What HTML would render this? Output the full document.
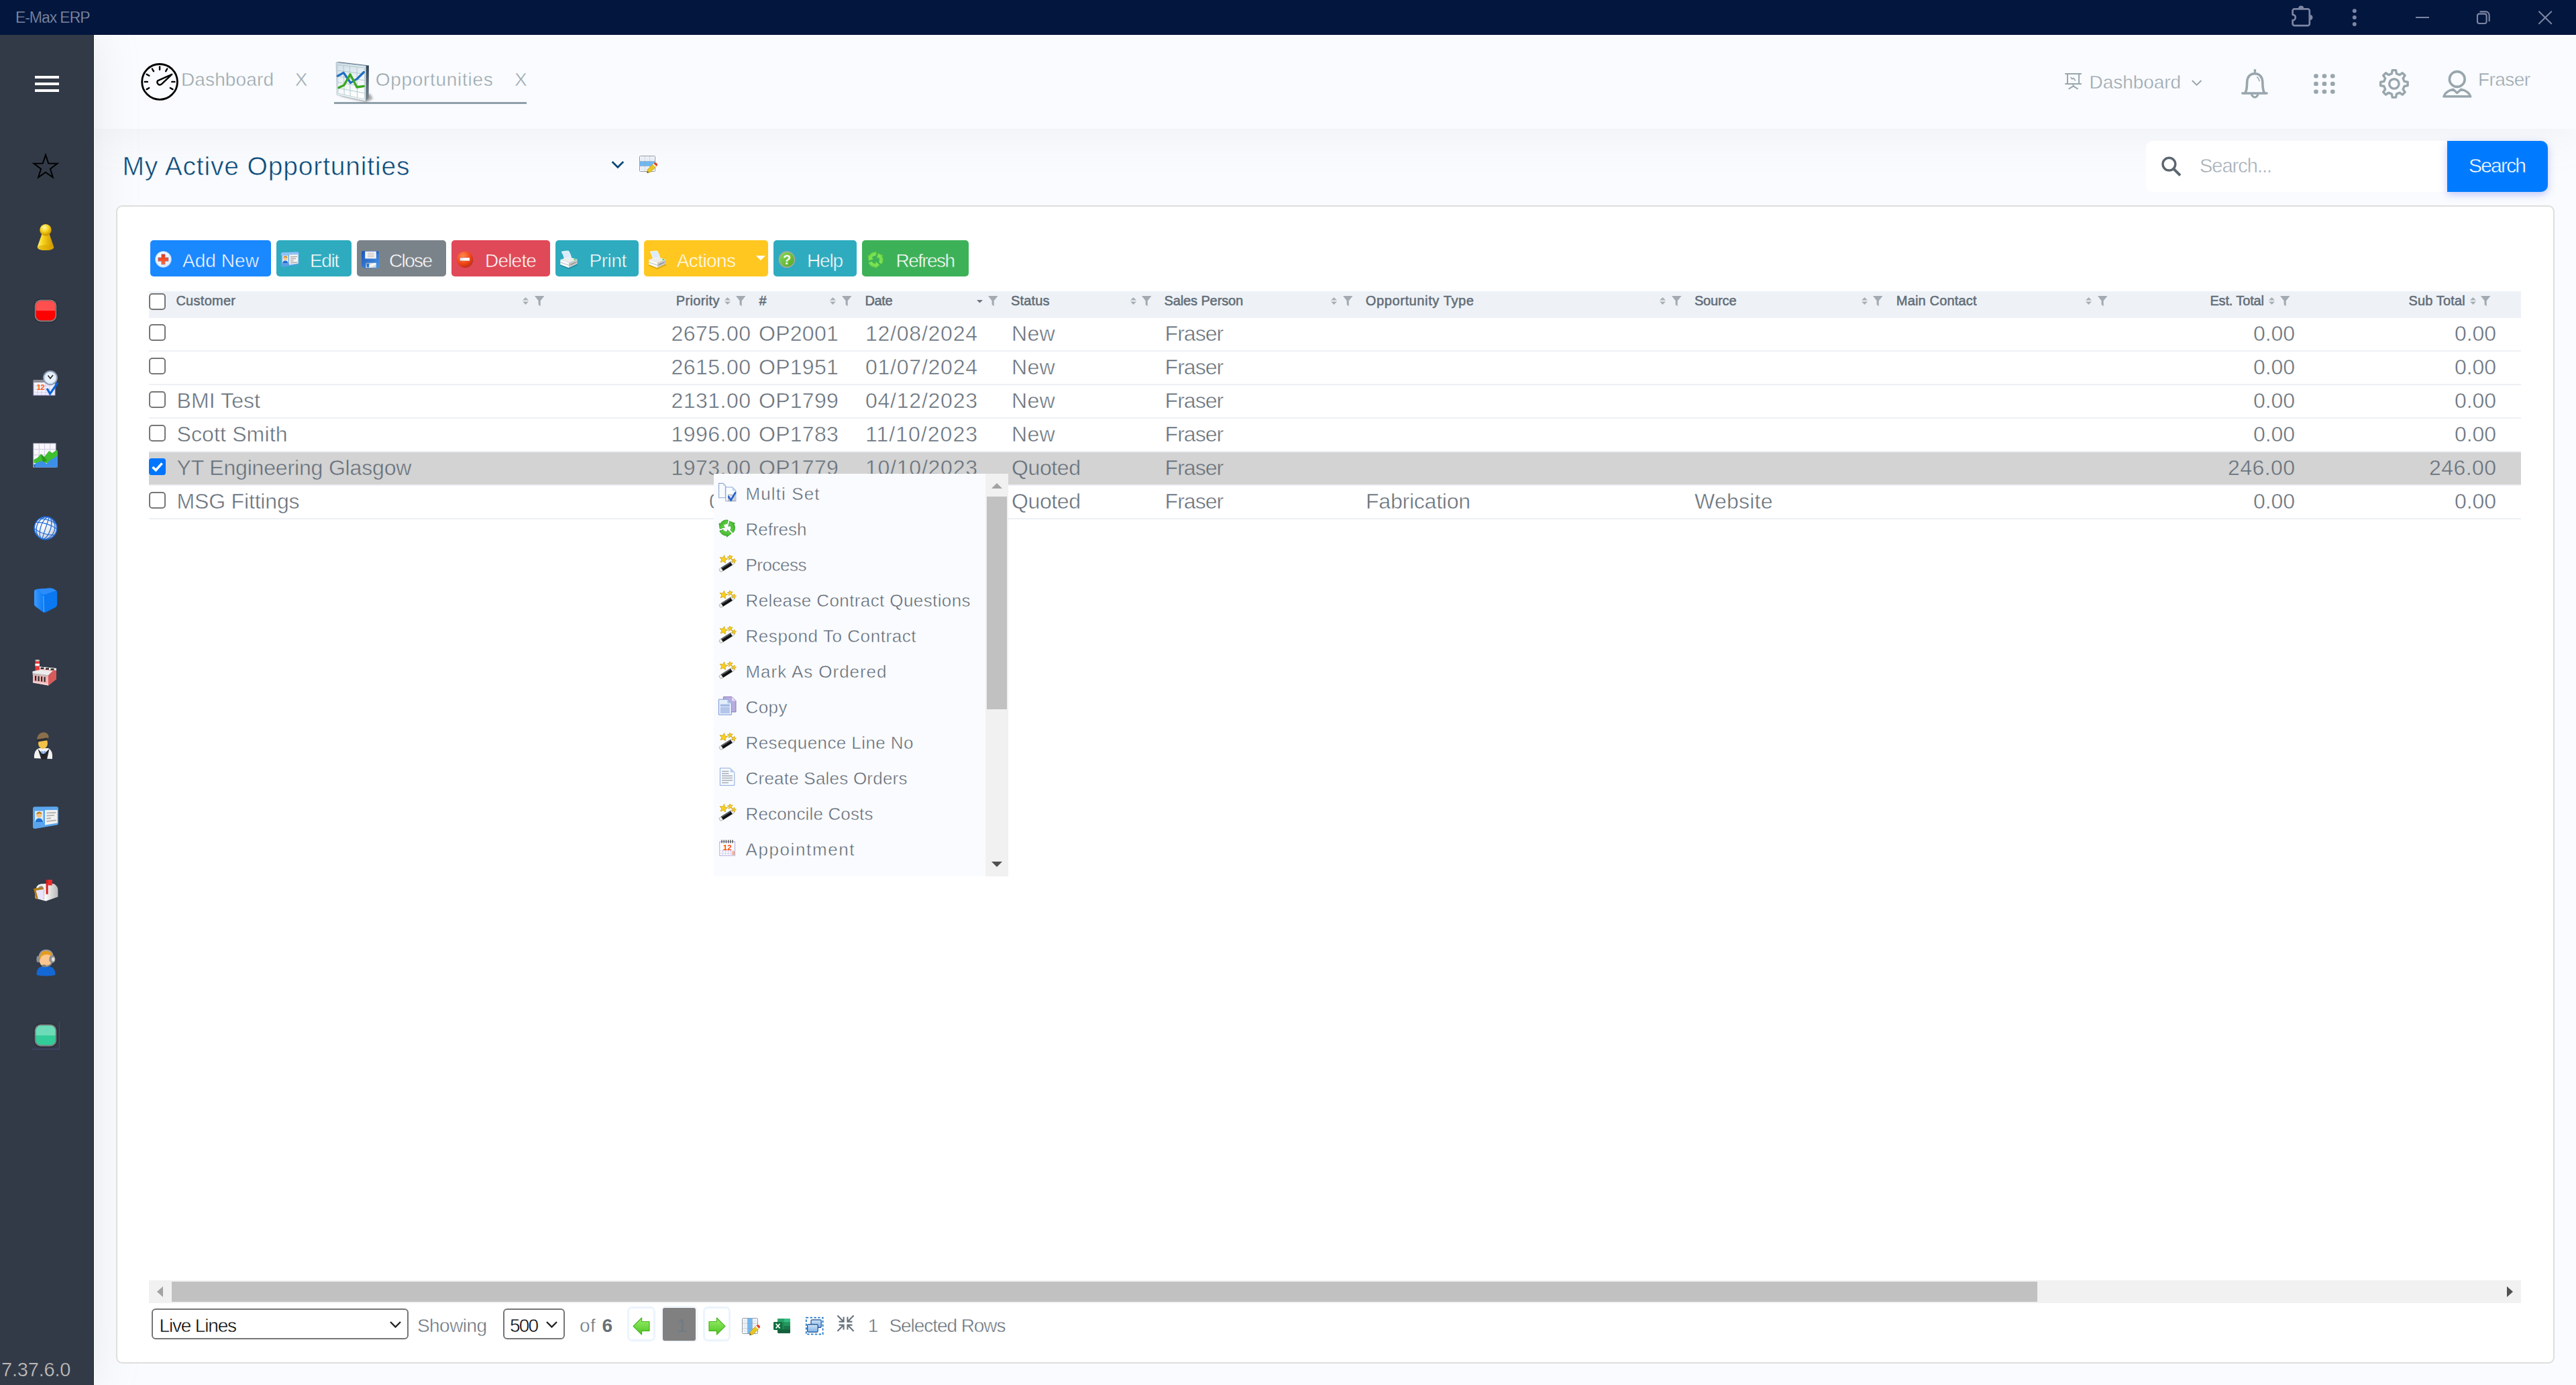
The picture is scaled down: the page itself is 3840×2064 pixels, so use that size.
<!DOCTYPE html>
<html lang="en"><head><meta charset="utf-8"><title>E-Max ERP</title>
<style>
html,body{margin:0;padding:0}
body{width:3840px;height:2064px;overflow:hidden;position:relative;background:#fafbfe;font-family:"Liberation Sans",sans-serif;}
.b{position:absolute;box-sizing:border-box;display:block}
.t{position:absolute;white-space:nowrap;line-height:1;margin:0;padding:0}
</style></head><body>
<div class="b " style="left:140px;top:52px;width:3700px;height:140px;background:#fafbfe;box-shadow:0 0 70px 0 rgba(154,161,171,.15);"></div>
<aside class="sidebar">
<div class="b " style="left:0px;top:52px;width:140px;height:2012px;background:#323a47;box-shadow:0 0 70px 0 rgba(154,161,171,.20);"></div>
<div class="b " style="left:139px;top:52px;width:1px;height:2012px;background:#29303c;"></div>
<div class="b " style="left:140px;top:52px;width:1px;height:2012px;background:#fff;"></div>
<div class="b " style="left:140px;top:52px;width:3700px;height:1px;background:#fff;"></div>
<div class="b " style="left:52px;top:112.5px;width:36px;height:4px;background:#fff;"></div>
<div class="b " style="left:52px;top:122.5px;width:36px;height:4px;background:#fff;"></div>
<div class="b " style="left:52px;top:132.5px;width:36px;height:4px;background:#fff;"></div>
<div class="t " style="left:2.00px;top:2027.45px;font-size:29px;color:#cbc7c5;letter-spacing:-0.196px;-webkit-text-stroke:0.5px #323a47;">7.37.6.0</div>
<svg class="b" style="left:46px;top:226px;" width="44" height="42" viewBox="46 226 44 42"><path transform="translate(68 247.5) scale(0.925) translate(-68 -247.5)" d="M68 229.5 L72.6 243.2 L87 243.4 L75.5 252 L79.7 265.6 L68 257.4 L56.3 265.6 L60.5 252 L49 243.4 L63.4 243.2 Z" fill="none" stroke="#000" stroke-width="2.1" stroke-linejoin="miter"/></svg>
<svg class="b" style="left:52px;top:332px;" width="32" height="44" viewBox="52 332 32 44"><defs><linearGradient id="pg" x1="0" x2="1"><stop offset="0" stop-color="#fff27a"/><stop offset=".35" stop-color="#f7d21a"/><stop offset="1" stop-color="#c98f00"/></linearGradient><radialGradient id="ph" cx=".4" cy=".3" r=".7"><stop offset="0" stop-color="#fff9a8"/><stop offset=".5" stop-color="#f7d21a"/><stop offset="1" stop-color="#c58c00"/></radialGradient></defs><path d="M63 347 L73 347 L80.3 368 Q80.3 373 68 373 Q55.7 373 55.7 368 Z" fill="url(#pg)"/><ellipse cx="68" cy="369" rx="12.3" ry="4" fill="#d9a400" opacity=".55"/><circle cx="68" cy="342.7" r="8.7" fill="url(#ph)"/></svg>
<svg class="b" style="left:50px;top:445px;" width="36" height="36" viewBox="0 0 36 36"><rect x="0.5" y="0.5" width="35" height="35" rx="10" fill="#20242e"/><rect x="1.6" y="1.6" width="32.8" height="32.8" rx="9" fill="#7d7d80"/><rect x="3.6" y="3.6" width="28.8" height="28.8" rx="7" fill="#ff0000"/><path d="M3.6 18 V10.6 a7 7 0 0 1 7 -7 H25.4 a7 7 0 0 1 7 7 V18 Z" fill="#ff4f4f"/></svg>
<svg class="b" style="left:48px;top:550px;" width="42" height="42" viewBox="48 550 42 42"><rect x="50" y="567" width="32" height="22" fill="#f4f2ff" stroke="#a9a4d6" stroke-width="1"/><rect x="50" y="566" width="32" height="4" fill="#8d8d95"/><path d="M52 575 H80 M52 580 H80 M52 585 H80 M56 572 V589 M62 572 V589 M68 572 V589 M74 572 V589" stroke="#c9c6ea" stroke-width=".8"/><text x="55" y="581" font-family="Liberation Sans,sans-serif" font-weight="bold" font-size="10.5" fill="#ff5a00">12</text><path d="M70 579 L74.6 586.8 L86 570.5" fill="none" stroke="#0a63d8" stroke-width="3.2"/><circle cx="75" cy="563" r="10.2" fill="#cfe3fb" stroke="#8a93a3" stroke-width="1.8"/><circle cx="75" cy="563" r="7.6" fill="#e9f3ff"/><path d="M71.5 559.5 L75 564 L79 559" fill="none" stroke="#222" stroke-width="1.5"/></svg>
<svg class="b" style="left:48px;top:658px;" width="42" height="42" viewBox="48 658 42 42"><rect x="50" y="661" width="33" height="35" fill="#f7f6fb" stroke="#d6d3e6" stroke-width="1"/><path d="M50 669.5 H83 M50 678 H83 M50 686.5 H83 M58.3 661 V696 M66.5 661 V696 M74.8 661 V696" stroke="#cfcbe2" stroke-width="1"/><path d="M50.5 685 L56 682 L61 676.5 L66 681 L73 672 L78 675 L84.5 670.5 L86 672 V690 H50.5 Z" fill="#3fc02f"/><path d="M61 676.5 L66 681 L70 686 L64 690 Z" fill="#2a9a1e"/><path d="M50.5 692 L57 688.5 L63 687 L69.5 691 L74 686 L79 683.5 L86 679 V696.5 H52.5 L50.5 695 Z" fill="#3d8fe6"/><path d="M50.5 692 L52.5 694 V697 L50.5 695 Z" fill="#1f5fb5"/></svg>
<svg class="b" style="left:49px;top:768px;" width="38" height="38" viewBox="49 768 38 38"><defs><radialGradient id="gg" cx=".4" cy=".35" r=".75"><stop offset="0" stop-color="#ffffff"/><stop offset=".6" stop-color="#dfe3ea"/><stop offset="1" stop-color="#a9b2c3"/></radialGradient></defs><circle cx="68" cy="787" r="17" fill="url(#gg)" stroke="#1c5fc4" stroke-width="1.6"/><g fill="none" stroke="#1f6ad6" stroke-width="1.25" transform="rotate(18 68 787)"><ellipse cx="68" cy="787" rx="7.5" ry="17"/><path d="M68 770 V804"/><path d="M51.5 783 Q68 778 84.5 783"/><path d="M51.5 792.5 Q68 799 84.5 792.5"/><path d="M55 776 Q68 772.5 81 776"/><ellipse cx="68" cy="787" rx="13.5" ry="17"/></g></svg>
<svg class="b" style="left:49px;top:874px;" width="38" height="42" viewBox="49 874 38 42"><defs><linearGradient id="cb1" x1="0" x2="1"><stop offset="0" stop-color="#3d9bff"/><stop offset="1" stop-color="#0a7af2"/></linearGradient></defs><path d="M51 882 Q51 878.5 54 878 L74 876.6 Q77 876.5 79 877.3 L84 880 Q85.2 881 85.2 883 V901 Q85.2 903.5 83 905 L68 912.5 Q66 913.4 64 912 L52.6 903.5 Q51 902.3 51 900 Z" fill="#0a78f0"/><path d="M51 882 Q51 879 54 878.8 L62 884.5 Q64.5 886 64.6 889 L65.5 912.6 Q64.6 912.6 64 912 L52.6 903.5 Q51 902.3 51 900 Z" fill="url(#cb1)"/><path d="M54 878 L74 876.6 Q77 876.5 79 877.3 L84 880 L66 886.3 Q64 886 62 884.5 Z" fill="#2b8dfb"/><path d="M64.6 888 L65.5 912" stroke="#8cc4ff" stroke-width="1" opacity=".8"/></svg>
<svg class="b" style="left:46px;top:981px;" width="42" height="44" viewBox="46 981 42 44"><rect x="52.5" y="984" width="6.5" height="17" fill="#e53b3b"/><rect x="52.5" y="989" width="6.5" height="3.4" fill="#fff"/><ellipse cx="55.8" cy="984.2" rx="3.3" ry="1.3" fill="#c9c9c9"/><path d="M59 993.5 L84 996 V1012 L72 1021.5 L49 1017 V1001 L59 999 Z" fill="#f4b4b4"/><path d="M72 1005 L84 996 V1012 L72 1021.5 Z" fill="#d85a5a"/><path d="M59 993.5 L84 996 L84 999 L59 996.5 Z" fill="#fafafa"/><path d="M48.5 1000.5 L60 998 L78 1000.3 L72 1006.3 L48.5 1003.3 Z" fill="#ececec"/><path d="M48.5 1003.3 L72 1006.3 L72 1008.6 L48.5 1005.6 Z" fill="#bdbdbd"/><g fill="#2c2c2c"><rect x="52" y="1007" width="2.2" height="7.5"/><rect x="56.5" y="1007.6" width="2.2" height="7.5"/><rect x="61" y="1008.2" width="2.2" height="7.5"/><rect x="65.5" y="1008.8" width="2.2" height="7.5"/><rect x="60.5" y="994.6" width="5" height="2.6"/><rect x="68" y="995.4" width="5" height="2.6"/><rect x="75.5" y="996.2" width="5" height="2.6"/></g><path d="M49 1015 L72 1019 V1021.5 L49 1017.4 Z" fill="#f7d2d2"/></svg>
<svg class="b" style="left:48px;top:1089px;" width="34" height="44" viewBox="48 1089 34 44"><path d="M51 1130 Q50 1118 58 1115 L72 1115 Q79 1118 78 1131 Z" fill="#f2f2f2"/><path d="M56.5 1116 L61.5 1131.5 L70 1131.5 L73.5 1116 L66 1123 L63 1123 Z" fill="#23252b"/><path d="M61.5 1118.5 L64.5 1120.5 L67.5 1118.5 L67.5 1123 L64.5 1121.4 L61.5 1123 Z" fill="#6fa5e6"/><ellipse cx="64" cy="1107.5" rx="7" ry="8.4" fill="#f2c148"/><path d="M55 1101.5 Q56 1092 65 1091.2 Q72.5 1091.5 72.8 1099.5 L64 1100.5 L56 1103 Z" fill="#8a6f4d"/><path d="M54.5 1102 L69.5 1099.6 L70.3 1103.3 L55.4 1105.8 Z" fill="#2b2e38"/></svg>
<svg class="b" style="left:47px;top:1200px;" width="42" height="38" viewBox="47 1200 42 38"><path d="M49 1205.5 Q49 1202.3 52 1202.3 L84 1202 Q87 1202 87 1205 V1226.5 Q87 1229 84.5 1229.6 L52.5 1235 Q49 1235.3 49 1232 Z" fill="#5aa5ee"/><path d="M67 1207.2 L85.5 1207 V1226.4 L67 1229.6 Z" fill="#f1f1f1"/><path d="M69.5 1211.5 L83 1211.2 M69.5 1215.6 L81 1215 M69.5 1219.8 L76 1219.2 M69.5 1224 L83.5 1222.4" stroke="#a9a9a9" stroke-width="1.7"/><rect x="52" y="1208.5" width="12.5" height="16.5" fill="#d9ebfb"/><circle cx="58.2" cy="1214.6" r="3.9" fill="#f3c27e"/><path d="M54.2 1213.8 Q54.6 1209.6 58.8 1209.8 Q62.6 1210.2 62.4 1213.5 Q60 1211.6 57 1212.6 Z" fill="#c07a12"/><path d="M52.6 1225 Q53.2 1219.4 58.2 1219.4 Q63.6 1219.4 64 1225 Z" fill="#1e6fd0"/></svg>
<svg class="b" style="left:48px;top:1309px;" width="42" height="38" viewBox="48 1309 42 38"><defs><linearGradient id="mb" x1="0" x2="1"><stop offset="0" stop-color="#ffffff"/><stop offset="1" stop-color="#b9b9b9"/></linearGradient></defs><path d="M66 1330 Q66 1317.5 76 1316.5 Q86.2 1317 86.4 1327 V1336.5 L68 1343 L66 1341 Z" fill="url(#mb)"/><path d="M52.5 1331 Q52.5 1318.4 61 1317.2 L76 1316.5 Q67 1318 67 1330 V1342.6 L52.5 1338.5 Z" fill="#eeeeee"/><path d="M55 1331 Q55 1321.5 61.5 1320.3 Q66 1320.5 65.6 1330 V1339.5 L55 1336.5 Z" fill="#8c8c8c"/><path d="M50 1324.2 L63.5 1322 L65.6 1337.5 L54 1340 Z" fill="#b27a14"/><path d="M53.5 1327 L65 1325.2 L65.8 1338.4 L57 1340 Z" fill="#e7e4fb"/><rect x="68.6" y="1311" width="3" height="21.6" fill="#d81e1e"/><rect x="71.4" y="1311" width="6.4" height="8.4" fill="#ee2a2a"/></svg>
<svg class="b" style="left:50px;top:1414px;" width="36" height="42" viewBox="50 1414 36 42"><path d="M54.5 1453 Q54 1442 62 1440.5 L74 1440.5 Q83 1442 82.5 1453 Q68 1456 54.5 1453 Z" fill="#1468d6"/><ellipse cx="67.8" cy="1430.2" rx="9.6" ry="10.8" fill="#fbc68f"/><path d="M57.6 1430 Q56.5 1417.6 67.5 1416.6 Q79 1416.6 79 1428.6 Q76.4 1421.6 68.6 1422.6 Q61 1423 59.6 1430.6 Z" fill="#e69b1c"/><path d="M58.5 1427 Q59.5 1416 69 1416 Q78.2 1416.2 79.2 1426.5" fill="none" stroke="#9b9b9b" stroke-width="2"/><ellipse cx="77.8" cy="1429.4" rx="4.6" ry="5.8" fill="#8f8f8f"/><ellipse cx="79.2" cy="1429.6" rx="2.2" ry="3.2" fill="#e1e1e1"/><ellipse cx="56.8" cy="1429.4" rx="2.4" ry="4.8" fill="#8f8f8f"/><path d="M77 1435 Q74 1441 64.5 1439.6" fill="none" stroke="#8f8f8f" stroke-width="1.8"/><ellipse cx="65.5" cy="1439.4" rx="3.4" ry="1.8" fill="#7e7e7e"/></svg>
<svg class="b" style="left:50px;top:1525px;" width="36" height="36" viewBox="0 0 36 36"><rect x="0.5" y="0.5" width="35" height="35" rx="10" fill="#20242e"/><rect x="1.6" y="1.6" width="32.8" height="32.8" rx="9" fill="#7d7d80"/><rect x="3.6" y="3.6" width="28.8" height="28.8" rx="7" fill="#33cc99"/><path d="M3.6 18 V10.6 a7 7 0 0 1 7 -7 H25.4 a7 7 0 0 1 7 7 V18 Z" fill="#6ddbb7"/></svg>
<div class="b " style="left:87.5px;top:1523px;width:1px;height:40px;background:#454b78;"></div>
<div class="b " style="left:48px;top:1562.5px;width:40.5px;height:1px;background:#454b78;"></div>
</aside>
<header class="titlebar">
<div class="b " style="left:0px;top:0px;width:3840px;height:52px;background:#03163e;"></div>
<div class="t " style="left:23.00px;top:14.53px;font-size:23px;color:#8d97b1;letter-spacing:-1.078px;-webkit-text-stroke:0.4px #03163e;">E-Max ERP</div>
<svg class="b" style="left:3412px;top:6px;" width="40" height="38" viewBox="3412 6 40 38"><path d="M3420.4 13.3 H3440 a2.8 2.8 0 0 1 2.8 2.8 V35.4 a2.8 2.8 0 0 1 -2.8 2.8 H3420.4 a2.8 2.8 0 0 1 -2.8 -2.8 V30.2 a4.2 4.2 0 0 0 0 -8.4 V16.1 a2.8 2.8 0 0 1 2.8 -2.8 Z" fill="none" stroke="#7c86a3" stroke-width="2.7" stroke-linejoin="round"/><path d="M3426.2 12.6 a4 4 0 0 1 8 0 Z M3443.4 22 a4 4 0 0 1 0 8 Z" fill="#7c86a3"/></svg>
<svg class="b" style="left:3505px;top:11px;" width="10" height="30" viewBox="3505 11 10 30"><circle cx="3509.8" cy="16.2" r="3" fill="#7c86a3"/><circle cx="3509.8" cy="26" r="3" fill="#7c86a3"/><circle cx="3509.8" cy="35.9" r="3" fill="#7c86a3"/></svg>
<div class="b " style="left:3601px;top:24.6px;width:20px;height:2.6px;background:#7c86a3;"></div>
<svg class="b" style="left:3688px;top:12px;" width="28" height="28" viewBox="3688 12 28 28"><rect x="3693" y="20.6" width="13.6" height="14.4" rx="3" fill="none" stroke="#7c86a3" stroke-width="2.1"/><path d="M3697.4 17.4 H3705.5 a5.2 5.2 0 0 1 5.2 5.2 V31.2" fill="none" stroke="#7c86a3" stroke-width="2.1" stroke-linecap="round"/></svg>
<svg class="b" style="left:3782px;top:14px;" width="24" height="24" viewBox="3782 14 24 24"><path d="M3784.4 16.8 L3803.8 35.8 M3803.8 16.8 L3784.4 35.8" stroke="#7c86a3" stroke-width="2" fill="none"/></svg>
</header>
<nav class="tabs">
<div class="t " style="left:270.00px;top:104.70px;font-size:28px;color:#98a6ad;letter-spacing:0.125px;-webkit-text-stroke:0.45px #fafbfe;">Dashboard</div>
<div class="t " style="left:439.70px;top:104.70px;font-size:28px;color:#98a6ad;-webkit-text-stroke:0.45px #fafbfe;">X</div>
<div class="t " style="left:559.70px;top:104.70px;font-size:28px;color:#98a6ad;letter-spacing:0.708px;-webkit-text-stroke:0.45px #fafbfe;">Opportunities</div>
<div class="t " style="left:767.00px;top:104.70px;font-size:28px;color:#98a6ad;-webkit-text-stroke:0.45px #fafbfe;">X</div>
<div class="b " style="left:498px;top:152px;width:287px;height:3px;background:#8fa0aa;"></div>
<svg class="b" style="left:208px;top:92px;" width="60" height="60" viewBox="208 92 60 60"><circle cx="238.05" cy="121.9" r="26.4" fill="none" stroke="#000" stroke-width="2.8"/><path d="M218.65 133.10 L222.29 131.00 M215.65 121.90 L219.85 121.90 M218.65 110.70 L222.29 112.80 M226.85 102.50 L228.95 106.14 M238.05 99.50 L238.05 103.70 M249.25 102.50 L247.15 106.14 M260.45 121.90 L256.25 121.90 M257.45 133.10 L253.81 131.00 " stroke="#000" stroke-width="2.4" stroke-linecap="round" fill="none"/><path d="M256.2 110.8 L240.6 125.6 a3.9 3.9 0 0 1 -5.6 -5.2 Z" fill="none" stroke="#000" stroke-width="2.4" stroke-linejoin="round"/></svg>
<svg class="b" style="left:496px;top:88px;" width="64" height="66" viewBox="496 88 64 66"><defs><linearGradient id="of" x1="0" y1="0" x2="0.2" y2="1"><stop offset="0" stop-color="#cfdde8"/><stop offset=".55" stop-color="#eef3f7"/><stop offset="1" stop-color="#ffffff"/></linearGradient><linearGradient id="os" x1="0" y1="0" x2="0" y2="1"><stop offset="0" stop-color="#2f4254"/><stop offset="1" stop-color="#7b8792"/></linearGradient><filter id="ob" x="-20%" y="-20%" width="140%" height="140%"><feGaussianBlur stdDeviation="1.6"/></filter></defs><path d="M504 142.5 L546 152.5 L556 147 L552 140 Z" fill="#6b6b6b" opacity=".55" filter="url(#ob)"/><path d="M501.1 93.1 L505 92.2 L549.9 97.4 L545.3 98.3 Z" fill="#587086"/><path d="M545.3 98.2 L549.9 97.4 L549.6 146.2 L545 150.8 Z" fill="url(#os)"/><path d="M501.1 93.1 L545.3 98.2 L545 150.8 L502.2 141.3 Z" fill="url(#of)" stroke="#9fb3c0" stroke-width=".8"/><g stroke="#a6c2c2" stroke-width=".9" fill="none" opacity=".9"><path d="M503 96.5 L543.5 101.2 L543.3 148 L504 139.2 Z"/><path d="M512.2 97.6 L513.2 141.3 M521.2 98.6 L522.2 143.3 M532 99.9 L532.6 145.6"/><path d="M503.2 105 L543.5 110.3 M503.4 113.8 L543.4 119.8 M503.6 122.6 L543.4 129.3 M503.8 131.2 L543.3 138.8"/></g><path d="M503.5 113.2 L512.2 108.3 L522.5 123.5 L532.3 117.5 L542.3 107.5" fill="none" stroke="#1f6fc2" stroke-width="3.2" stroke-linejoin="round" stroke-linecap="round"/><path d="M504.9 130.8 L513 126.7 L522 110.7 L532 130 L542.3 128.3" fill="none" stroke="#3aa81e" stroke-width="3.3" stroke-linejoin="round" stroke-linecap="round"/></svg>
</nav>
<div class="topnav">
<svg class="b" style="left:3076px;top:107px;" width="30" height="28" viewBox="3076 107 30 28"><path d="M3078.2 110.1 H3102.9 M3078.2 125 H3102.9 M3082 110.1 V125 M3099.1 110.1 V125" stroke="#98a6ad" stroke-width="2" fill="none"/><path d="M3090.6 125 V129.6 M3083.6 132.6 L3090.6 128.4 L3097.6 132.6" stroke="#98a6ad" stroke-width="2" fill="none"/><path d="M3086.6 115 L3089 117.8 L3090.8 116.4 L3094 120.2" stroke="#98a6ad" stroke-width="1.6" fill="none"/></svg>
<svg class="b" style="left:3266px;top:118px;" width="18" height="12" viewBox="3266 118 18 12"><path d="M3267.8 120 L3274.6 126.6 L3281.4 120" stroke="#98a6ad" stroke-width="2" fill="none"/></svg>
<svg class="b" style="left:3338px;top:100px;" width="46" height="50" viewBox="3338 100 46 50"><path d="M3361.4 103.2 V108.4" stroke="#98a6ad" stroke-width="3.4" fill="none"/><path d="M3342.8 139 H3379 M3346.6 139 C3349.8 134 3349.4 128.5 3349.6 122.5 C3350 113.4 3355 109.8 3361.2 109.8 C3367.4 109.8 3372.4 113.4 3372.8 122.5 C3373 128.5 3372.6 134 3375.8 139" stroke="#98a6ad" stroke-width="3.6" fill="none" stroke-linecap="round"/><path d="M3356.6 141.4 Q3361.2 148.6 3365.8 141.4" fill="none" stroke="#98a6ad" stroke-width="3" stroke-linecap="round"/><path d="M3364 114.6 Q3367.6 116.6 3368 121.4" stroke="#98a6ad" stroke-width="1.6" fill="none"/></svg>
<svg class="b" style="left:3448px;top:109px;" width="34" height="32" viewBox="3448 109 34 32"><rect x="3449.2" y="110.2" width="6.6" height="6.2" rx="2.6" fill="#98a6ad"/><rect x="3449.2" y="121.8" width="6.6" height="6.2" rx="2.6" fill="#98a6ad"/><rect x="3449.2" y="133.5" width="6.6" height="6.2" rx="2.6" fill="#98a6ad"/><rect x="3461.6" y="110.2" width="6.6" height="6.2" rx="2.6" fill="#98a6ad"/><rect x="3461.6" y="121.8" width="6.6" height="6.2" rx="2.6" fill="#98a6ad"/><rect x="3461.6" y="133.5" width="6.6" height="6.2" rx="2.6" fill="#98a6ad"/><rect x="3474.0" y="110.2" width="6.6" height="6.2" rx="2.6" fill="#98a6ad"/><rect x="3474.0" y="121.8" width="6.6" height="6.2" rx="2.6" fill="#98a6ad"/><rect x="3474.0" y="133.5" width="6.6" height="6.2" rx="2.6" fill="#98a6ad"/></svg>
<svg class="b" style="left:3544px;top:100px;" width="50" height="50" viewBox="3544 100 50 50"><path d="M3565.34 109.71 L3566.26 104.67 L3571.54 104.67 L3572.46 109.71 L3577.13 111.64 L3581.33 108.73 L3585.07 112.47 L3582.16 116.67 L3584.09 121.34 L3589.13 122.26 L3589.13 127.54 L3584.09 128.46 L3582.16 133.13 L3585.07 137.33 L3581.33 141.07 L3577.13 138.16 L3572.46 140.09 L3571.54 145.13 L3566.26 145.13 L3565.34 140.09 L3560.67 138.16 L3556.47 141.07 L3552.73 137.33 L3555.64 133.13 L3553.71 128.46 L3548.67 127.54 L3548.67 122.26 L3553.71 121.34 L3555.64 116.67 L3552.73 112.47 L3556.47 108.73 L3560.67 111.64 Z" fill="none" stroke="#98a6ad" stroke-width="3.4" stroke-linejoin="round"/><circle cx="3568.9" cy="124.9" r="7.2" fill="none" stroke="#98a6ad" stroke-width="3.4"/></svg>
<svg class="b" style="left:3638px;top:101px;" width="50" height="48" viewBox="3638 101 50 48"><circle cx="3662.8" cy="118" r="11.4" fill="none" stroke="#98a6ad" stroke-width="3.6"/><path d="M3642.8 143.8 C3645 137.6 3651 134.6 3657 133.2 L3662.8 138.4 L3668.6 133.2 C3674.6 134.6 3680.6 137.6 3682.8 143.8 Z" fill="none" stroke="#98a6ad" stroke-width="3.4" stroke-linejoin="round"/></svg>
<div class="t " style="left:3114.60px;top:108.70px;font-size:28px;color:#98a6ad;letter-spacing:-0.062px;-webkit-text-stroke:0.45px #fafbfe;">Dashboard</div>
<div class="t " style="left:3694.00px;top:105.30px;font-size:28px;color:#98a6ad;letter-spacing:-0.575px;-webkit-text-stroke:0.45px #fafbfe;">Fraser</div>
</div>
<main class="content">
<div class="page-title">
<div class="t " style="left:182.50px;top:227.99px;font-size:39px;color:#0b4a78;letter-spacing:0.835px;-webkit-text-stroke:0.6px #fafbfe;">My Active Opportunities</div>
<svg class="b" style="left:910px;top:238px;" width="22" height="15" viewBox="910 238 22 15"><path d="M912.6 241 L920.9 249.3 L929.2 241" fill="none" stroke="#0b4a78" stroke-width="2.7"/></svg>
<svg class="b" style="left:952px;top:231px;" width="28.0" height="28.0" viewBox="-1 -1 28 28"><rect x="0.5" y="0.5" width="23" height="23" rx="1" fill="#fff" stroke="#8d96a2" stroke-width="1"/><g fill="#e5edf8"><rect x="2" y="2" width="5" height="5"/><rect x="9.6" y="2" width="5" height="5"/><rect x="17" y="2" width="5" height="5"/><rect x="2" y="9.5" width="5" height="5"/><rect x="17" y="9.5" width="5" height="5"/><rect x="9.6" y="9.5" width="5" height="5"/><rect x="2" y="17" width="5" height="5"/><rect x="9.6" y="17" width="5" height="5"/><rect x="17" y="17" width="5" height="5"/></g><rect x="0.5" y="8.2" width="23" height="7.4" fill="#6fb8f2"/><path d="M8.3 0.5 V23.5 M15.7 0.5 V23.5 M0.5 8.2 H23.5 M0.5 15.7 H23.5" stroke="#9aa3ae" stroke-width=".8" opacity=".8"/><g transform="translate(11.5 25.6) rotate(-45)"><path d="M0 0 L4 -2.9 H17 V2.9 H4 Z" fill="#e9c61f" stroke="#b48f10" stroke-width=".6"/><path d="M0 0 L2.2 -1.6 V1.6 Z" fill="#444"/><rect x="15" y="-2.9" width="2" height="5.8" fill="#f4f4f4"/><path d="M17 -2.9 H18.6 Q20.4 -2.9 20.4 0 Q20.4 2.9 18.6 2.9 H17 Z" fill="#e2452f"/></g></svg>
</div>
<form class="search">
<div class="b " style="left:3199px;top:210px;width:449px;height:76px;background:#fff;border-radius:10px 0 0 10px;"></div>
<div class="b " style="left:3648px;top:210px;width:150px;height:76px;background:#007bff;border-radius:0 10px 10px 0;box-shadow:0 4px 12px 0 rgba(100,116,245,.38);"></div>
<div class="t " style="left:3680.00px;top:232.21px;font-size:30px;color:#fff;letter-spacing:-1.800px;-webkit-text-stroke:0.5px #007bff;">Search</div>
<div class="t " style="left:3279.00px;top:233.45px;font-size:29px;color:#a5adb5;letter-spacing:-1.000px;-webkit-text-stroke:0.45px #fff;">Search...</div>
<svg class="b" style="left:3220px;top:231px;" width="34" height="34" viewBox="3220 231 34 34"><circle cx="3233.4" cy="244.6" r="9.4" fill="none" stroke="#5c6670" stroke-width="3.4"/><path d="M3240.4 251.8 L3250 261.4" stroke="#5c6670" stroke-width="4"/></svg>
</form>
<section class="card">
<div class="b " style="left:173px;top:306px;width:3634.5px;height:1726px;background:#fff;border:2px solid #dedede;border-radius:9px;"></div>
<div class="toolbar">
<div class="b " style="left:224px;top:358px;width:180px;height:54px;background:#1a88ff;border-radius:5px;"></div>
<div class="t " style="left:272.00px;top:374.80px;font-size:28px;color:#fff;letter-spacing:0.042px;-webkit-text-stroke:0.55px #1a88ff;">Add New</div>
<div class="b " style="left:412px;top:358px;width:112px;height:54px;background:#2eabbf;border-radius:5px;"></div>
<div class="t " style="left:462.00px;top:374.80px;font-size:28px;color:#fff;letter-spacing:-1.417px;-webkit-text-stroke:0.55px #2eabbf;">Edit</div>
<div class="b " style="left:532px;top:358px;width:133px;height:54px;background:#7b838a;border-radius:5px;"></div>
<div class="t " style="left:580.00px;top:374.80px;font-size:28px;color:#fff;letter-spacing:-1.656px;-webkit-text-stroke:0.55px #7b838a;">Close</div>
<div class="b " style="left:673px;top:358px;width:147px;height:54px;background:#e04957;border-radius:5px;"></div>
<div class="t " style="left:723.00px;top:374.80px;font-size:28px;color:#fff;letter-spacing:-0.800px;-webkit-text-stroke:0.55px #e04957;">Delete</div>
<div class="b " style="left:828px;top:358px;width:124px;height:54px;background:#2eabbf;border-radius:5px;"></div>
<div class="t " style="left:878.40px;top:374.80px;font-size:28px;color:#fff;letter-spacing:-0.406px;-webkit-text-stroke:0.55px #2eabbf;">Print</div>
<div class="b " style="left:960px;top:358px;width:185px;height:54px;background:#ffc720;border-radius:5px;"></div>
<div class="t " style="left:1008.80px;top:374.80px;font-size:28px;color:#fff;letter-spacing:-0.612px;-webkit-text-stroke:0.55px #ffc720;">Actions</div>
<div class="b " style="left:1153px;top:358px;width:124px;height:54px;background:#2eabbf;border-radius:5px;"></div>
<div class="t " style="left:1203.00px;top:374.80px;font-size:28px;color:#fff;letter-spacing:-1.208px;-webkit-text-stroke:0.55px #2eabbf;">Help</div>
<div class="b " style="left:1285px;top:358px;width:159px;height:54px;background:#3db158;border-radius:5px;"></div>
<div class="t " style="left:1335.50px;top:374.80px;font-size:28px;color:#fff;letter-spacing:-1.583px;-webkit-text-stroke:0.55px #3db158;">Refresh</div>
<svg class="b" style="left:1127px;top:381px;" width="14" height="7" viewBox="0 0 14 7"><path d="M0 0 H14 L7 7 Z" fill="#fff"/></svg>
<svg class="b" style="left:229px;top:372px;" width="30" height="30" viewBox="229 372 30 30"><defs><radialGradient id="ad" cx=".4" cy=".35" r=".8"><stop offset="0" stop-color="#ffffff"/><stop offset=".7" stop-color="#e3f0ff"/><stop offset="1" stop-color="#a9cdf6"/></radialGradient><linearGradient id="ar" x1="0" y1="0" x2="0" y2="1"><stop offset="0" stop-color="#e8321a"/><stop offset="1" stop-color="#ff6a3c"/></linearGradient></defs><circle cx="244.2" cy="387.3" r="11.6" fill="#1b5fb8" opacity=".35"/><circle cx="243.5" cy="386.5" r="12" fill="url(#ad)" stroke="#9cc4f3" stroke-width=".8"/><path d="M240.6 378.8 H246.2 V383.8 H251.1 V389.4 H246.2 V394.2 H240.6 V389.4 H235.6 V383.8 H240.6 Z" fill="url(#ar)" stroke="#59b1ff" stroke-width=".5"/></svg>
<svg class="b" style="left:416px;top:372px;" width="32" height="28" viewBox="416 372 32 28"><path d="M418.8 379 Q418.8 376.4 421.4 376.2 L443 375.4 Q445.4 375.4 445.4 377.6 V392.4 Q445.4 394.2 443.4 394.5 L421.6 398 Q418.8 398.2 418.8 395.6 Z" fill="#5b9fe8"/><path d="M418.8 379 Q418.8 376.4 421.4 376.2 L443 375.4 Q445.4 375.4 445.4 377.6 V379.4 L418.8 380.6 Z" fill="#8fc1f5"/><path d="M431 379.8 L444.6 379.2 V392.6 L431 394.8 Z" fill="#f3f3f3"/><path d="M433 383 L443 382.4 M433 386 L441 385.4 M433 389 L437.6 388.6 M433 392 L443.4 390.6" stroke="#a5a5a5" stroke-width="1.3"/><rect x="420.8" y="380.6" width="9" height="12" fill="#dbeafa"/><circle cx="425.2" cy="385.2" r="2.9" fill="#f6c98b"/><path d="M422.2 384.6 Q422.6 381.4 425.6 381.6 Q428.6 381.8 428.4 384.6 Q426.4 383 424.2 383.6 Z" fill="#c9861a"/><path d="M421.2 392.6 Q421.6 388.6 425.2 388.6 Q429 388.6 429.4 392.6 Z" fill="#1f6dcc"/></svg>
<svg class="b" style="left:537px;top:372px;" width="30" height="30" viewBox="537 372 30 30"><defs><linearGradient id="fl" x1="0" y1="0" x2="1" y2="1"><stop offset="0" stop-color="#1b55b8"/><stop offset="1" stop-color="#4b97e6"/></linearGradient><linearGradient id="fs" x1="0" y1="0" x2="1" y2="1"><stop offset="0" stop-color="#9aa1a8"/><stop offset=".5" stop-color="#ffffff"/><stop offset="1" stop-color="#b9bec4"/></linearGradient></defs><path d="M539 376.4 Q539 374 541.4 374 H562.6 Q565 374 565 376.4 V397.4 Q565 399.8 562.6 399.8 H542.6 L539 396.4 Z" fill="url(#fl)"/><rect x="544.2" y="374.6" width="16.6" height="10.8" fill="#f4f4f4"/><path d="M548 377.4 H557.6 M548 380 H557.6 M548 382.6 H557.6" stroke="#c4c4c4" stroke-width="1.3"/><rect x="545.4" y="391.8" width="15.4" height="7.2" fill="url(#fs)"/><rect x="546.6" y="392.8" width="3.6" height="5.6" fill="#2a72d8"/><rect x="562" y="375.6" width="1.6" height="1.6" fill="#184a9e"/></svg>
<svg class="b" style="left:679px;top:372px;" width="30" height="30" viewBox="679 372 30 30"><defs><radialGradient id="dl" cx=".38" cy=".3" r=".8"><stop offset="0" stop-color="#ff8a52"/><stop offset=".55" stop-color="#f4491a"/><stop offset="1" stop-color="#b82a0c"/></radialGradient><linearGradient id="dw" x1="0" x2="1"><stop offset="0" stop-color="#d9dde0"/><stop offset=".5" stop-color="#ffffff"/><stop offset="1" stop-color="#ffffff"/></linearGradient></defs><circle cx="693.6" cy="387.4" r="11.6" fill="#7a1b2a" opacity=".45"/><circle cx="693" cy="386.5" r="12" fill="url(#dl)"/><rect x="685.2" y="383.9" width="15" height="5" fill="url(#dw)" stroke="#c6411f" stroke-width=".5"/></svg>
<svg class="b" style="left:832px;top:372px;" width="32" height="30" viewBox="832 372 32 30"><path d="M835.3 394.6 L848 400 L861 393.6 L861 395 L848 401 L835.3 395.8 Z" fill="#000" opacity=".25"/><path d="M835.3 387 L848.4 391.6 L847.9 399.1 L835.3 394.2 Z" fill="#fbfbfb"/><path d="M848.4 391.6 L860.5 386.4 L860.5 393.2 L847.9 399.1 Z" fill="#c9c9c9"/><path d="M835.3 387 L847 382.7 L860.5 386.4 L848.4 391.6 Z" fill="#ececec"/><path d="M835.3 390.8 L848.2 395.4 L860.5 389.8" fill="none" stroke="#a8a8a8" stroke-width=".8"/><path d="M850.6 393.6 L858.4 390.2 L858.4 391.6 L850.6 395.2 Z" fill="#8f8f8f"/><path d="M837.2 375.2 Q844 373.6 847.6 374 Q850.4 378.6 851.6 383.6 L841.4 385.2 Q840 379.6 837.2 375.2 Z" fill="#dcebfb" stroke="#f7fbff" stroke-width=".8"/><path d="M855 386.2 L857.8 385.6 L858.6 387 L855.8 387.8 Z" fill="#4fd04a"/></svg>
<svg class="b" style="left:964.2px;top:372px;" width="32" height="30" viewBox="832 372 32 30"><path d="M835.3 394.6 L848 400 L861 393.6 L861 395 L848 401 L835.3 395.8 Z" fill="#000" opacity=".25"/><path d="M835.3 387 L848.4 391.6 L847.9 399.1 L835.3 394.2 Z" fill="#fbfbfb"/><path d="M848.4 391.6 L860.5 386.4 L860.5 393.2 L847.9 399.1 Z" fill="#c9c9c9"/><path d="M835.3 387 L847 382.7 L860.5 386.4 L848.4 391.6 Z" fill="#ececec"/><path d="M835.3 390.8 L848.2 395.4 L860.5 389.8" fill="none" stroke="#a8a8a8" stroke-width=".8"/><path d="M850.6 393.6 L858.4 390.2 L858.4 391.6 L850.6 395.2 Z" fill="#8f8f8f"/><path d="M837.2 375.2 Q844 373.6 847.6 374 Q850.4 378.6 851.6 383.6 L841.4 385.2 Q840 379.6 837.2 375.2 Z" fill="#dcebfb" stroke="#f7fbff" stroke-width=".8"/><path d="M855 386.2 L857.8 385.6 L858.6 387 L855.8 387.8 Z" fill="#4fd04a"/></svg>
<svg class="b" style="left:1159px;top:372px;" width="30" height="30" viewBox="1159 372 30 30"><defs><linearGradient id="hp" x1="0" y1="0" x2="1" y2="1"><stop offset="0" stop-color="#8fd85c"/><stop offset="1" stop-color="#4fa824"/></linearGradient></defs><circle cx="1173" cy="386.7" r="11.6" fill="url(#hp)" stroke="#a8a8a8" stroke-width="1.5"/><text x="1173" y="394.2" text-anchor="middle" font-family="Liberation Sans,sans-serif" font-weight="bold" font-size="20" fill="#f4f7ee">?</text></svg>
<svg class="b" style="left:1289.5px;top:372.4px;" width="30.0" height="30.0" viewBox="1289.5 372.4 30.0 30.0"><defs><linearGradient id="rg1" x1="0" y1="0" x2="1" y2="1"><stop offset="0" stop-color="#5fd33c"/><stop offset="1" stop-color="#9af070"/></linearGradient></defs><path transform="rotate(0 1304.5 387.4)" d="M1306.06 376.31 A11.20 11.20 0 0 0 1294.80 381.80 L1293.34 380.69 L1294.45 388.81 L1301.56 386.56 L1299.18 384.57 A6.03 6.03 0 0 1 1304.92 381.38 Z" fill="url(#rg1)" stroke="#58c83a" stroke-width=".7" stroke-linejoin="round"/><path transform="rotate(120 1304.5 387.4)" d="M1306.06 376.31 A11.20 11.20 0 0 0 1294.80 381.80 L1293.34 380.69 L1294.45 388.81 L1301.56 386.56 L1299.18 384.57 A6.03 6.03 0 0 1 1304.92 381.38 Z" fill="url(#rg1)" stroke="#58c83a" stroke-width=".7" stroke-linejoin="round"/><path transform="rotate(240 1304.5 387.4)" d="M1306.06 376.31 A11.20 11.20 0 0 0 1294.80 381.80 L1293.34 380.69 L1294.45 388.81 L1301.56 386.56 L1299.18 384.57 A6.03 6.03 0 0 1 1304.92 381.38 Z" fill="url(#rg1)" stroke="#58c83a" stroke-width=".7" stroke-linejoin="round"/></svg>
</div>
<div class="grid">
<div class="grid-head">
<div class="b " style="left:222px;top:434px;width:3536px;height:40px;background:#eef2f7;"></div>
<div class="t " style="left:262.40px;top:438.07px;font-size:20px;color:#636d77;letter-spacing:0.279px;-webkit-text-stroke:0.55px #636d77;">Customer</div>
<svg class="b" style="left:779px;top:443px;" width="9" height="11" viewBox="0 0 9 11"><path d="M4.5 0 L9 4.6 L0 4.6 Z M0 6.4 L9 6.4 L4.5 11 Z" fill="#a9afb6"/></svg>
<svg class="b" style="left:797px;top:441px;" width="15" height="16" viewBox="0 0 15 16"><path d="M0 0 H14.5 L8.7 7.2 V15.2 L5.6 13 V7.2 Z" fill="#a4aab1"/></svg>
<div class="t " style="left:1007.80px;top:438.07px;font-size:20px;color:#636d77;letter-spacing:0.336px;-webkit-text-stroke:0.55px #636d77;">Priority</div>
<svg class="b" style="left:1080px;top:443px;" width="9" height="11" viewBox="0 0 9 11"><path d="M4.5 0 L9 4.6 L0 4.6 Z M0 6.4 L9 6.4 L4.5 11 Z" fill="#a9afb6"/></svg>
<svg class="b" style="left:1097px;top:441px;" width="15" height="16" viewBox="0 0 15 16"><path d="M0 0 H14.5 L8.7 7.2 V15.2 L5.6 13 V7.2 Z" fill="#a4aab1"/></svg>
<div class="t " style="left:1131.40px;top:438.07px;font-size:20px;color:#636d77;-webkit-text-stroke:0.55px #636d77;">#</div>
<svg class="b" style="left:1237px;top:443px;" width="9" height="11" viewBox="0 0 9 11"><path d="M4.5 0 L9 4.6 L0 4.6 Z M0 6.4 L9 6.4 L4.5 11 Z" fill="#a9afb6"/></svg>
<svg class="b" style="left:1255px;top:441px;" width="15" height="16" viewBox="0 0 15 16"><path d="M0 0 H14.5 L8.7 7.2 V15.2 L5.6 13 V7.2 Z" fill="#a4aab1"/></svg>
<div class="t " style="left:1289.40px;top:438.07px;font-size:20px;color:#636d77;letter-spacing:-0.350px;-webkit-text-stroke:0.55px #636d77;">Date</div>
<svg class="b" style="left:1473px;top:441px;" width="15" height="16" viewBox="0 0 15 16"><path d="M0 0 H14.5 L8.7 7.2 V15.2 L5.6 13 V7.2 Z" fill="#a4aab1"/></svg>
<div class="t " style="left:1506.90px;top:438.07px;font-size:20px;color:#636d77;letter-spacing:0.190px;-webkit-text-stroke:0.55px #636d77;">Status</div>
<svg class="b" style="left:1685px;top:443px;" width="9" height="11" viewBox="0 0 9 11"><path d="M4.5 0 L9 4.6 L0 4.6 Z M0 6.4 L9 6.4 L4.5 11 Z" fill="#a9afb6"/></svg>
<svg class="b" style="left:1702px;top:441px;" width="15" height="16" viewBox="0 0 15 16"><path d="M0 0 H14.5 L8.7 7.2 V15.2 L5.6 13 V7.2 Z" fill="#a4aab1"/></svg>
<div class="t " style="left:1735.40px;top:438.07px;font-size:20px;color:#636d77;letter-spacing:-0.100px;-webkit-text-stroke:0.55px #636d77;">Sales Person</div>
<svg class="b" style="left:1984px;top:443px;" width="9" height="11" viewBox="0 0 9 11"><path d="M4.5 0 L9 4.6 L0 4.6 Z M0 6.4 L9 6.4 L4.5 11 Z" fill="#a9afb6"/></svg>
<svg class="b" style="left:2002px;top:441px;" width="15" height="16" viewBox="0 0 15 16"><path d="M0 0 H14.5 L8.7 7.2 V15.2 L5.6 13 V7.2 Z" fill="#a4aab1"/></svg>
<div class="t " style="left:2035.80px;top:438.07px;font-size:20px;color:#636d77;letter-spacing:0.613px;-webkit-text-stroke:0.55px #636d77;">Opportunity Type</div>
<svg class="b" style="left:2474px;top:443px;" width="9" height="11" viewBox="0 0 9 11"><path d="M4.5 0 L9 4.6 L0 4.6 Z M0 6.4 L9 6.4 L4.5 11 Z" fill="#a9afb6"/></svg>
<svg class="b" style="left:2492px;top:441px;" width="15" height="16" viewBox="0 0 15 16"><path d="M0 0 H14.5 L8.7 7.2 V15.2 L5.6 13 V7.2 Z" fill="#a4aab1"/></svg>
<div class="t " style="left:2525.90px;top:438.07px;font-size:20px;color:#636d77;letter-spacing:-0.135px;-webkit-text-stroke:0.55px #636d77;">Source</div>
<svg class="b" style="left:2774.5px;top:443px;" width="9" height="11" viewBox="0 0 9 11"><path d="M4.5 0 L9 4.6 L0 4.6 Z M0 6.4 L9 6.4 L4.5 11 Z" fill="#a9afb6"/></svg>
<svg class="b" style="left:2791.6px;top:441px;" width="15" height="16" viewBox="0 0 15 16"><path d="M0 0 H14.5 L8.7 7.2 V15.2 L5.6 13 V7.2 Z" fill="#a4aab1"/></svg>
<div class="t " style="left:2826.80px;top:438.07px;font-size:20px;color:#636d77;letter-spacing:0.175px;-webkit-text-stroke:0.55px #636d77;">Main Contact</div>
<svg class="b" style="left:3109px;top:443px;" width="9" height="11" viewBox="0 0 9 11"><path d="M4.5 0 L9 4.6 L0 4.6 Z M0 6.4 L9 6.4 L4.5 11 Z" fill="#a9afb6"/></svg>
<svg class="b" style="left:3126.5px;top:441px;" width="15" height="16" viewBox="0 0 15 16"><path d="M0 0 H14.5 L8.7 7.2 V15.2 L5.6 13 V7.2 Z" fill="#a4aab1"/></svg>
<div class="t " style="left:3294.40px;top:438.07px;font-size:20px;color:#636d77;letter-spacing:-0.142px;-webkit-text-stroke:0.55px #636d77;">Est. Total</div>
<svg class="b" style="left:3381.6px;top:443px;" width="9" height="11" viewBox="0 0 9 11"><path d="M4.5 0 L9 4.6 L0 4.6 Z M0 6.4 L9 6.4 L4.5 11 Z" fill="#a9afb6"/></svg>
<svg class="b" style="left:3398.7px;top:441px;" width="15" height="16" viewBox="0 0 15 16"><path d="M0 0 H14.5 L8.7 7.2 V15.2 L5.6 13 V7.2 Z" fill="#a4aab1"/></svg>
<div class="t " style="left:3590.40px;top:438.07px;font-size:20px;color:#636d77;letter-spacing:0.150px;-webkit-text-stroke:0.55px #636d77;">Sub Total</div>
<svg class="b" style="left:3681.6px;top:443px;" width="9" height="11" viewBox="0 0 9 11"><path d="M4.5 0 L9 4.6 L0 4.6 Z M0 6.4 L9 6.4 L4.5 11 Z" fill="#a9afb6"/></svg>
<svg class="b" style="left:3698.3px;top:441px;" width="15" height="16" viewBox="0 0 15 16"><path d="M0 0 H14.5 L8.7 7.2 V15.2 L5.6 13 V7.2 Z" fill="#a4aab1"/></svg>
<svg class="b" style="left:1455.5px;top:447px;" width="9" height="5" viewBox="0 0 9 5"><path d="M0 0 L9 0 L4.5 4.6 Z" fill="#6c757d"/></svg>
<div class="b " style="left:222px;top:436.5px;width:25px;height:25px;background:#fff;border:2px solid #767676;border-radius:5px;"></div>
</div>
<div class="grid-body">
<div class="b " style="left:222px;top:522px;width:3536px;height:2px;background:#edf0f5;"></div>
<div class="b " style="left:222px;top:482.5px;width:25px;height:25px;background:#fff;border:2px solid #767676;border-radius:5px;"></div>
<div class="t " style="left:1000.40px;top:480.91px;font-size:32px;color:#66707a;letter-spacing:0.496px;-webkit-text-stroke:0.5px #fff;">2675.00</div>
<div class="t " style="left:1131.00px;top:480.91px;font-size:32px;color:#66707a;letter-spacing:0.265px;-webkit-text-stroke:0.5px #fff;">OP2001</div>
<div class="t " style="left:1290.00px;top:480.91px;font-size:32px;color:#66707a;letter-spacing:0.764px;-webkit-text-stroke:0.5px #fff;">12/08/2024</div>
<div class="t " style="left:1508.00px;top:480.91px;font-size:32px;color:#66707a;letter-spacing:0.288px;-webkit-text-stroke:0.5px #fff;">New</div>
<div class="t " style="left:1736.60px;top:480.91px;font-size:32px;color:#66707a;letter-spacing:-0.980px;-webkit-text-stroke:0.5px #fff;">Fraser</div>
<div class="t " style="left:3359.00px;top:480.91px;font-size:32px;color:#66707a;letter-spacing:-0.083px;-webkit-text-stroke:0.5px #fff;">0.00</div>
<div class="t " style="left:3659.00px;top:480.91px;font-size:32px;color:#66707a;letter-spacing:-0.083px;-webkit-text-stroke:0.5px #fff;">0.00</div>
<div class="b " style="left:222px;top:572px;width:3536px;height:2px;background:#edf0f5;"></div>
<div class="b " style="left:222px;top:532.5px;width:25px;height:25px;background:#fff;border:2px solid #767676;border-radius:5px;"></div>
<div class="t " style="left:1000.40px;top:530.91px;font-size:32px;color:#66707a;letter-spacing:0.496px;-webkit-text-stroke:0.5px #fff;">2615.00</div>
<div class="t " style="left:1131.00px;top:530.91px;font-size:32px;color:#66707a;letter-spacing:0.265px;-webkit-text-stroke:0.5px #fff;">OP1951</div>
<div class="t " style="left:1290.00px;top:530.91px;font-size:32px;color:#66707a;letter-spacing:0.764px;-webkit-text-stroke:0.5px #fff;">01/07/2024</div>
<div class="t " style="left:1508.00px;top:530.91px;font-size:32px;color:#66707a;letter-spacing:0.288px;-webkit-text-stroke:0.5px #fff;">New</div>
<div class="t " style="left:1736.60px;top:530.91px;font-size:32px;color:#66707a;letter-spacing:-0.980px;-webkit-text-stroke:0.5px #fff;">Fraser</div>
<div class="t " style="left:3359.00px;top:530.91px;font-size:32px;color:#66707a;letter-spacing:-0.083px;-webkit-text-stroke:0.5px #fff;">0.00</div>
<div class="t " style="left:3659.00px;top:530.91px;font-size:32px;color:#66707a;letter-spacing:-0.083px;-webkit-text-stroke:0.5px #fff;">0.00</div>
<div class="b " style="left:222px;top:622px;width:3536px;height:2px;background:#edf0f5;"></div>
<div class="b " style="left:222px;top:582.5px;width:25px;height:25px;background:#fff;border:2px solid #767676;border-radius:5px;"></div>
<div class="t " style="left:263.50px;top:580.91px;font-size:32px;color:#66707a;letter-spacing:0.089px;-webkit-text-stroke:0.5px #fff;">BMI Test</div>
<div class="t " style="left:1000.40px;top:580.91px;font-size:32px;color:#66707a;letter-spacing:0.496px;-webkit-text-stroke:0.5px #fff;">2131.00</div>
<div class="t " style="left:1131.00px;top:580.91px;font-size:32px;color:#66707a;letter-spacing:0.265px;-webkit-text-stroke:0.5px #fff;">OP1799</div>
<div class="t " style="left:1290.00px;top:580.91px;font-size:32px;color:#66707a;letter-spacing:0.764px;-webkit-text-stroke:0.5px #fff;">04/12/2023</div>
<div class="t " style="left:1508.00px;top:580.91px;font-size:32px;color:#66707a;letter-spacing:0.288px;-webkit-text-stroke:0.5px #fff;">New</div>
<div class="t " style="left:1736.60px;top:580.91px;font-size:32px;color:#66707a;letter-spacing:-0.980px;-webkit-text-stroke:0.5px #fff;">Fraser</div>
<div class="t " style="left:3359.00px;top:580.91px;font-size:32px;color:#66707a;letter-spacing:-0.083px;-webkit-text-stroke:0.5px #fff;">0.00</div>
<div class="t " style="left:3659.00px;top:580.91px;font-size:32px;color:#66707a;letter-spacing:-0.083px;-webkit-text-stroke:0.5px #fff;">0.00</div>
<div class="b " style="left:222px;top:672px;width:3536px;height:2px;background:#edf0f5;"></div>
<div class="b " style="left:222px;top:632.5px;width:25px;height:25px;background:#fff;border:2px solid #767676;border-radius:5px;"></div>
<div class="t " style="left:263.50px;top:630.91px;font-size:32px;color:#66707a;letter-spacing:0.138px;-webkit-text-stroke:0.5px #fff;">Scott Smith</div>
<div class="t " style="left:1000.40px;top:630.91px;font-size:32px;color:#66707a;letter-spacing:0.496px;-webkit-text-stroke:0.5px #fff;">1996.00</div>
<div class="t " style="left:1131.00px;top:630.91px;font-size:32px;color:#66707a;letter-spacing:0.265px;-webkit-text-stroke:0.5px #fff;">OP1783</div>
<div class="t " style="left:1290.00px;top:630.91px;font-size:32px;color:#66707a;letter-spacing:1.028px;-webkit-text-stroke:0.5px #fff;">11/10/2023</div>
<div class="t " style="left:1508.00px;top:630.91px;font-size:32px;color:#66707a;letter-spacing:0.288px;-webkit-text-stroke:0.5px #fff;">New</div>
<div class="t " style="left:1736.60px;top:630.91px;font-size:32px;color:#66707a;letter-spacing:-0.980px;-webkit-text-stroke:0.5px #fff;">Fraser</div>
<div class="t " style="left:3359.00px;top:630.91px;font-size:32px;color:#66707a;letter-spacing:-0.083px;-webkit-text-stroke:0.5px #fff;">0.00</div>
<div class="t " style="left:3659.00px;top:630.91px;font-size:32px;color:#66707a;letter-spacing:-0.083px;-webkit-text-stroke:0.5px #fff;">0.00</div>
<div class="b " style="left:222px;top:674px;width:3536px;height:49px;background:#d3d3d3;"></div>
<div class="b " style="left:222px;top:722px;width:3536px;height:2px;background:#edf0f5;"></div>
<div class="b " style="left:222px;top:682.5px;width:25px;height:25px;background:#0075ff;border-radius:4px;"></div>
<svg class="b" style="left:222px;top:682.5px;" width="25" height="25" viewBox="0 0 25 25"><path d="M5.5 13 L10.3 17.6 L19.6 7.4" fill="none" stroke="#fff" stroke-width="3.6" stroke-linecap="butt" stroke-linejoin="miter"/></svg>
<div class="t " style="left:263.50px;top:680.91px;font-size:32px;color:#66707a;letter-spacing:-0.167px;-webkit-text-stroke:0.5px #d3d3d3;">YT Engineering Glasgow</div>
<div class="t " style="left:1000.40px;top:680.91px;font-size:32px;color:#66707a;letter-spacing:0.496px;-webkit-text-stroke:0.5px #d3d3d3;">1973.00</div>
<div class="t " style="left:1131.00px;top:680.91px;font-size:32px;color:#66707a;letter-spacing:0.265px;-webkit-text-stroke:0.5px #d3d3d3;">OP1779</div>
<div class="t " style="left:1290.00px;top:680.91px;font-size:32px;color:#66707a;letter-spacing:0.764px;-webkit-text-stroke:0.5px #d3d3d3;">10/10/2023</div>
<div class="t " style="left:1508.00px;top:680.91px;font-size:32px;color:#66707a;letter-spacing:-0.400px;-webkit-text-stroke:0.5px #d3d3d3;">Quoted</div>
<div class="t " style="left:1736.60px;top:680.91px;font-size:32px;color:#66707a;letter-spacing:-0.980px;-webkit-text-stroke:0.5px #d3d3d3;">Fraser</div>
<div class="t " style="left:3321.00px;top:680.91px;font-size:32px;color:#66707a;letter-spacing:0.425px;-webkit-text-stroke:0.5px #d3d3d3;">246.00</div>
<div class="t " style="left:3621.00px;top:680.91px;font-size:32px;color:#66707a;letter-spacing:0.425px;-webkit-text-stroke:0.5px #d3d3d3;">246.00</div>
<div class="b " style="left:222px;top:772px;width:3536px;height:2px;background:#edf0f5;"></div>
<div class="b " style="left:222px;top:732.5px;width:25px;height:25px;background:#fff;border:2px solid #767676;border-radius:5px;"></div>
<div class="t " style="left:263.50px;top:730.91px;font-size:32px;color:#66707a;letter-spacing:-0.170px;-webkit-text-stroke:0.5px #fff;">MSG Fittings</div>
<div class="t " style="left:1057.00px;top:730.91px;font-size:32px;color:#66707a;letter-spacing:-0.083px;-webkit-text-stroke:0.5px #fff;">0.00</div>
<div class="t " style="left:1131.00px;top:730.91px;font-size:32px;color:#66707a;letter-spacing:0.265px;-webkit-text-stroke:0.5px #fff;">OP1776</div>
<div class="t " style="left:1290.00px;top:730.91px;font-size:32px;color:#66707a;letter-spacing:0.764px;-webkit-text-stroke:0.5px #fff;">09/10/2023</div>
<div class="t " style="left:1508.00px;top:730.91px;font-size:32px;color:#66707a;letter-spacing:-0.400px;-webkit-text-stroke:0.5px #fff;">Quoted</div>
<div class="t " style="left:1736.60px;top:730.91px;font-size:32px;color:#66707a;letter-spacing:-0.980px;-webkit-text-stroke:0.5px #fff;">Fraser</div>
<div class="t " style="left:2036.00px;top:730.91px;font-size:32px;color:#66707a;letter-spacing:-0.225px;-webkit-text-stroke:0.5px #fff;">Fabrication</div>
<div class="t " style="left:2526.00px;top:730.91px;font-size:32px;color:#66707a;letter-spacing:0.250px;-webkit-text-stroke:0.5px #fff;">Website</div>
<div class="t " style="left:3359.00px;top:730.91px;font-size:32px;color:#66707a;letter-spacing:-0.083px;-webkit-text-stroke:0.5px #fff;">0.00</div>
<div class="t " style="left:3659.00px;top:730.91px;font-size:32px;color:#66707a;letter-spacing:-0.083px;-webkit-text-stroke:0.5px #fff;">0.00</div>
</div>
</div>
<div class="context-menu">
<div class="b " style="left:1064px;top:706px;width:439px;height:600px;background:#fafbfe;"></div>
<div class="b " style="left:1469px;top:706px;width:34px;height:600px;background:#f1f1f1;"></div>
<div class="b " style="left:1471px;top:740px;width:30px;height:317px;background:#c1c1c1;"></div>
<svg class="b" style="left:1478px;top:720px;" width="16" height="8" viewBox="0 0 16 8"><path d="M0 8 L8 0 L16 8 Z" fill="#a3a3a3"/></svg>
<svg class="b" style="left:1478px;top:1284px;" width="16" height="8" viewBox="0 0 16 8"><path d="M0 0 H16 L8 8 Z" fill="#505050"/></svg>
<div class="t " style="left:1111.50px;top:723.49px;font-size:26px;color:#5b6671;letter-spacing:1.109px;-webkit-text-stroke:0.5px #fafbfe;">Multi Set</div>
<div class="t " style="left:1111.50px;top:776.49px;font-size:26px;color:#5b6671;-webkit-text-stroke:0.5px #fafbfe;">Refresh</div>
<div class="t " style="left:1111.50px;top:829.49px;font-size:26px;color:#5b6671;letter-spacing:-0.479px;-webkit-text-stroke:0.5px #fafbfe;">Process</div>
<div class="t " style="left:1111.50px;top:882.49px;font-size:26px;color:#5b6671;letter-spacing:0.395px;-webkit-text-stroke:0.5px #fafbfe;">Release Contract Questions</div>
<div class="t " style="left:1111.50px;top:935.49px;font-size:26px;color:#5b6671;letter-spacing:0.569px;-webkit-text-stroke:0.5px #fafbfe;">Respond To Contract</div>
<div class="t " style="left:1111.50px;top:988.49px;font-size:26px;color:#5b6671;letter-spacing:0.964px;-webkit-text-stroke:0.5px #fafbfe;">Mark As Ordered</div>
<div class="t " style="left:1111.50px;top:1041.49px;font-size:26px;color:#5b6671;letter-spacing:0.417px;-webkit-text-stroke:0.5px #fafbfe;">Copy</div>
<div class="t " style="left:1111.50px;top:1094.49px;font-size:26px;color:#5b6671;letter-spacing:0.419px;-webkit-text-stroke:0.5px #fafbfe;">Resequence Line No</div>
<div class="t " style="left:1111.50px;top:1147.49px;font-size:26px;color:#5b6671;letter-spacing:0.222px;-webkit-text-stroke:0.5px #fafbfe;">Create Sales Orders</div>
<div class="t " style="left:1111.50px;top:1200.49px;font-size:26px;color:#5b6671;letter-spacing:0.152px;-webkit-text-stroke:0.5px #fafbfe;">Reconcile Costs</div>
<div class="t " style="left:1111.50px;top:1253.49px;font-size:26px;color:#5b6671;letter-spacing:1.600px;-webkit-text-stroke:0.5px #fafbfe;">Appointment</div>
<svg class="b" style="left:1069px;top:718px;" width="31" height="32" viewBox="1069 718 31 32"><path d="M1071.6 720.4 H1078 L1081.4 723.8 V741.8 H1071.6 Z" fill="#f7fbff" stroke="#8fa6cf" stroke-width="1.1"/><path d="M1078 720.4 L1081.4 723.8 H1078 Z" fill="#b9d4f3"/><path d="M1081.8 726 H1091.6 L1096.8 731.2 V746.8 H1081.8 Z" fill="#fafdff" stroke="#8fa6cf" stroke-width="1.1"/><path d="M1091.6 726 L1096.8 731.2 H1091.6 Z" fill="#b9d4f3"/><rect x="1085.4" y="737.6" width="9.4" height="8.6" fill="#e0e0e6" stroke="#8f8f9a" stroke-width=".8"/><path d="M1085.6 739.6 L1089.6 745.4 L1096.6 733.4" fill="none" stroke="#1d5fd0" stroke-width="2.6"/></svg>
<svg class="b" style="left:1068.075px;top:770.575px;" width="31.25" height="31.25" viewBox="1068.075 770.575 31.25 31.25"><defs><linearGradient id="rg2" x1="0" y1="0" x2="1" y2="1"><stop offset="0" stop-color="#22a016"/><stop offset="1" stop-color="#8cf060"/></linearGradient></defs><path transform="rotate(0 1083.7 786.2)" d="M1085.33 774.61 A11.70 11.70 0 0 0 1073.57 780.35 L1072.04 779.20 L1073.20 787.68 L1080.62 785.32 L1078.14 783.24 A6.30 6.30 0 0 1 1084.14 779.92 Z" fill="url(#rg2)" stroke="#1d9412" stroke-width=".7" stroke-linejoin="round"/><path transform="rotate(120 1083.7 786.2)" d="M1085.33 774.61 A11.70 11.70 0 0 0 1073.57 780.35 L1072.04 779.20 L1073.20 787.68 L1080.62 785.32 L1078.14 783.24 A6.30 6.30 0 0 1 1084.14 779.92 Z" fill="url(#rg2)" stroke="#1d9412" stroke-width=".7" stroke-linejoin="round"/><path transform="rotate(240 1083.7 786.2)" d="M1085.33 774.61 A11.70 11.70 0 0 0 1073.57 780.35 L1072.04 779.20 L1073.20 787.68 L1080.62 785.32 L1078.14 783.24 A6.30 6.30 0 0 1 1084.14 779.92 Z" fill="url(#rg2)" stroke="#1d9412" stroke-width=".7" stroke-linejoin="round"/></svg>
<svg class="b" style="left:1070.5px;top:827.4px;" width="27" height="27" viewBox="0 0 27 27"><g transform="translate(2.5 23.2) rotate(-32)"><rect x="-1" y="-2.8" width="25.5" height="5.6" rx="2.7" fill="#ececec" stroke="#8f8f8f" stroke-width=".6"/><rect x="3.4" y="-2.8" width="16.4" height="5.6" fill="#101113"/><rect x="3.4" y="-2.8" width="16.4" height="1.7" fill="#5b5e63"/></g><path d="M8.69 0.40 L9.64 4.63 L13.84 5.72 L10.10 7.93 L10.36 12.26 L7.11 9.39 L3.07 10.98 L4.79 6.99 L2.04 3.64 L6.36 4.05 Z" fill="#f7d11e" stroke="#c99a0c" stroke-width=".7" stroke-linejoin="round"/><path d="M16.80 -0.46 L18.31 2.09 L21.26 1.92 L19.31 4.14 L20.39 6.89 L17.67 5.72 L15.38 7.60 L15.66 4.65 L13.17 3.05 L16.06 2.41 Z" fill="#f7d11e" stroke="#c99a0c" stroke-width=".7" stroke-linejoin="round"/><path d="M23.75 5.08 L24.20 7.52 L26.58 8.22 L24.40 9.41 L24.46 11.89 L22.66 10.18 L20.32 11.01 L21.39 8.77 L19.88 6.80 L22.34 7.12 Z" fill="#f7d11e" stroke="#c99a0c" stroke-width=".7" stroke-linejoin="round"/></svg>
<svg class="b" style="left:1070.5px;top:880.4px;" width="27" height="27" viewBox="0 0 27 27"><g transform="translate(2.5 23.2) rotate(-32)"><rect x="-1" y="-2.8" width="25.5" height="5.6" rx="2.7" fill="#ececec" stroke="#8f8f8f" stroke-width=".6"/><rect x="3.4" y="-2.8" width="16.4" height="5.6" fill="#101113"/><rect x="3.4" y="-2.8" width="16.4" height="1.7" fill="#5b5e63"/></g><path d="M8.69 0.40 L9.64 4.63 L13.84 5.72 L10.10 7.93 L10.36 12.26 L7.11 9.39 L3.07 10.98 L4.79 6.99 L2.04 3.64 L6.36 4.05 Z" fill="#f7d11e" stroke="#c99a0c" stroke-width=".7" stroke-linejoin="round"/><path d="M16.80 -0.46 L18.31 2.09 L21.26 1.92 L19.31 4.14 L20.39 6.89 L17.67 5.72 L15.38 7.60 L15.66 4.65 L13.17 3.05 L16.06 2.41 Z" fill="#f7d11e" stroke="#c99a0c" stroke-width=".7" stroke-linejoin="round"/><path d="M23.75 5.08 L24.20 7.52 L26.58 8.22 L24.40 9.41 L24.46 11.89 L22.66 10.18 L20.32 11.01 L21.39 8.77 L19.88 6.80 L22.34 7.12 Z" fill="#f7d11e" stroke="#c99a0c" stroke-width=".7" stroke-linejoin="round"/></svg>
<svg class="b" style="left:1070.5px;top:933.4px;" width="27" height="27" viewBox="0 0 27 27"><g transform="translate(2.5 23.2) rotate(-32)"><rect x="-1" y="-2.8" width="25.5" height="5.6" rx="2.7" fill="#ececec" stroke="#8f8f8f" stroke-width=".6"/><rect x="3.4" y="-2.8" width="16.4" height="5.6" fill="#101113"/><rect x="3.4" y="-2.8" width="16.4" height="1.7" fill="#5b5e63"/></g><path d="M8.69 0.40 L9.64 4.63 L13.84 5.72 L10.10 7.93 L10.36 12.26 L7.11 9.39 L3.07 10.98 L4.79 6.99 L2.04 3.64 L6.36 4.05 Z" fill="#f7d11e" stroke="#c99a0c" stroke-width=".7" stroke-linejoin="round"/><path d="M16.80 -0.46 L18.31 2.09 L21.26 1.92 L19.31 4.14 L20.39 6.89 L17.67 5.72 L15.38 7.60 L15.66 4.65 L13.17 3.05 L16.06 2.41 Z" fill="#f7d11e" stroke="#c99a0c" stroke-width=".7" stroke-linejoin="round"/><path d="M23.75 5.08 L24.20 7.52 L26.58 8.22 L24.40 9.41 L24.46 11.89 L22.66 10.18 L20.32 11.01 L21.39 8.77 L19.88 6.80 L22.34 7.12 Z" fill="#f7d11e" stroke="#c99a0c" stroke-width=".7" stroke-linejoin="round"/></svg>
<svg class="b" style="left:1070.5px;top:986.4px;" width="27" height="27" viewBox="0 0 27 27"><g transform="translate(2.5 23.2) rotate(-32)"><rect x="-1" y="-2.8" width="25.5" height="5.6" rx="2.7" fill="#ececec" stroke="#8f8f8f" stroke-width=".6"/><rect x="3.4" y="-2.8" width="16.4" height="5.6" fill="#101113"/><rect x="3.4" y="-2.8" width="16.4" height="1.7" fill="#5b5e63"/></g><path d="M8.69 0.40 L9.64 4.63 L13.84 5.72 L10.10 7.93 L10.36 12.26 L7.11 9.39 L3.07 10.98 L4.79 6.99 L2.04 3.64 L6.36 4.05 Z" fill="#f7d11e" stroke="#c99a0c" stroke-width=".7" stroke-linejoin="round"/><path d="M16.80 -0.46 L18.31 2.09 L21.26 1.92 L19.31 4.14 L20.39 6.89 L17.67 5.72 L15.38 7.60 L15.66 4.65 L13.17 3.05 L16.06 2.41 Z" fill="#f7d11e" stroke="#c99a0c" stroke-width=".7" stroke-linejoin="round"/><path d="M23.75 5.08 L24.20 7.52 L26.58 8.22 L24.40 9.41 L24.46 11.89 L22.66 10.18 L20.32 11.01 L21.39 8.77 L19.88 6.80 L22.34 7.12 Z" fill="#f7d11e" stroke="#c99a0c" stroke-width=".7" stroke-linejoin="round"/></svg>
<svg class="b" style="left:1070.5px;top:1092.4px;" width="27" height="27" viewBox="0 0 27 27"><g transform="translate(2.5 23.2) rotate(-32)"><rect x="-1" y="-2.8" width="25.5" height="5.6" rx="2.7" fill="#ececec" stroke="#8f8f8f" stroke-width=".6"/><rect x="3.4" y="-2.8" width="16.4" height="5.6" fill="#101113"/><rect x="3.4" y="-2.8" width="16.4" height="1.7" fill="#5b5e63"/></g><path d="M8.69 0.40 L9.64 4.63 L13.84 5.72 L10.10 7.93 L10.36 12.26 L7.11 9.39 L3.07 10.98 L4.79 6.99 L2.04 3.64 L6.36 4.05 Z" fill="#f7d11e" stroke="#c99a0c" stroke-width=".7" stroke-linejoin="round"/><path d="M16.80 -0.46 L18.31 2.09 L21.26 1.92 L19.31 4.14 L20.39 6.89 L17.67 5.72 L15.38 7.60 L15.66 4.65 L13.17 3.05 L16.06 2.41 Z" fill="#f7d11e" stroke="#c99a0c" stroke-width=".7" stroke-linejoin="round"/><path d="M23.75 5.08 L24.20 7.52 L26.58 8.22 L24.40 9.41 L24.46 11.89 L22.66 10.18 L20.32 11.01 L21.39 8.77 L19.88 6.80 L22.34 7.12 Z" fill="#f7d11e" stroke="#c99a0c" stroke-width=".7" stroke-linejoin="round"/></svg>
<svg class="b" style="left:1070.5px;top:1198.4px;" width="27" height="27" viewBox="0 0 27 27"><g transform="translate(2.5 23.2) rotate(-32)"><rect x="-1" y="-2.8" width="25.5" height="5.6" rx="2.7" fill="#ececec" stroke="#8f8f8f" stroke-width=".6"/><rect x="3.4" y="-2.8" width="16.4" height="5.6" fill="#101113"/><rect x="3.4" y="-2.8" width="16.4" height="1.7" fill="#5b5e63"/></g><path d="M8.69 0.40 L9.64 4.63 L13.84 5.72 L10.10 7.93 L10.36 12.26 L7.11 9.39 L3.07 10.98 L4.79 6.99 L2.04 3.64 L6.36 4.05 Z" fill="#f7d11e" stroke="#c99a0c" stroke-width=".7" stroke-linejoin="round"/><path d="M16.80 -0.46 L18.31 2.09 L21.26 1.92 L19.31 4.14 L20.39 6.89 L17.67 5.72 L15.38 7.60 L15.66 4.65 L13.17 3.05 L16.06 2.41 Z" fill="#f7d11e" stroke="#c99a0c" stroke-width=".7" stroke-linejoin="round"/><path d="M23.75 5.08 L24.20 7.52 L26.58 8.22 L24.40 9.41 L24.46 11.89 L22.66 10.18 L20.32 11.01 L21.39 8.77 L19.88 6.80 L22.34 7.12 Z" fill="#f7d11e" stroke="#c99a0c" stroke-width=".7" stroke-linejoin="round"/></svg>
<svg class="b" style="left:1069px;top:1036px;" width="31" height="32" viewBox="1069 1036 31 32"><path d="M1078.4 1038.4 H1091 L1097 1044.4 V1061 H1078.4 Z" fill="#b9addf" stroke="#7e6fb8" stroke-width=".9"/><path d="M1091 1038.4 L1097 1044.4 H1091 Z" fill="#e3dcf6"/><path d="M1071.4 1042.2 H1084.4 L1090.4 1048.2 V1065.2 H1071.4 Z" fill="#e4eefb" stroke="#6f8fd0" stroke-width=".9"/><path d="M1084.4 1042.2 L1090.4 1048.2 H1084.4 Z" fill="#a9c6ee"/><rect x="1073.8" y="1049.6" width="14" height="3" fill="#9fb6e2"/><rect x="1073.8" y="1053.6" width="14" height="9.4" fill="#b4c5ea"/></svg>
<svg class="b" style="left:1071px;top:1142px;" width="27" height="31" viewBox="1071 1142 27 31"><path d="M1073.4 1144.8 H1088.6 L1094.8 1151 V1170.4 H1073.4 Z" fill="#f8fbff" stroke="#7f9fd6" stroke-width=".9"/><path d="M1088.6 1144.8 L1094.8 1151 H1088.6 Z" fill="#b5d0f2"/><path d="M1076 1149.4 H1086.4 M1076 1152.8 H1086.4 M1076 1156.2 H1092 M1076 1159.6 H1092 M1076 1163 H1092 M1076 1166.4 H1086" stroke="#a4adb8" stroke-width="1.5"/></svg>
<svg class="b" style="left:1070px;top:1249px;" width="29" height="29" viewBox="1070 1249 29 29"><rect x="1072.8" y="1254.4" width="22.8" height="20.6" fill="#ffffff" stroke="#a7a1d8" stroke-width=".9"/><path d="M1074 1268 H1094.4 M1074 1271.4 H1094.4 M1077.6 1265.4 V1274.6 M1081.6 1265.4 V1274.6 M1085.6 1265.4 V1274.6 M1089.6 1265.4 V1274.6" stroke="#c9c4ea" stroke-width=".8"/><rect x="1091.4" y="1268.4" width="3.6" height="5.8" fill="#f6b08c"/><text x="1084.2" y="1266.6" text-anchor="middle" font-family="Liberation Sans,sans-serif" font-weight="bold" font-size="11.5" fill="#ff4b00">12</text><path d="M1076 1256 V1252 M1079.2 1256 V1252 M1082.4 1256 V1252 M1085.6 1256 V1252 M1088.8 1256 V1252 M1092 1256 V1252" stroke="#333" stroke-width="1.2" stroke-linecap="round"/></svg>
</div>
<div class="hscroll">
<div class="b " style="left:222px;top:1908px;width:3536px;height:34px;background:#f1f1f1;"></div>
<div class="b " style="left:256px;top:1910px;width:2781px;height:30px;background:#c1c1c1;"></div>
<svg class="b" style="left:234px;top:1917px;" width="9" height="16" viewBox="0 0 9 16"><path d="M9 0 V16 L0 8 Z" fill="#a3a3a3"/></svg>
<svg class="b" style="left:3736.5px;top:1917px;" width="9" height="16" viewBox="0 0 9 16"><path d="M0 0 V16 L9 8 Z" fill="#505050"/></svg>
</div>
<div class="pager">
<div class="b " style="left:226px;top:1950px;width:383px;height:46px;background:#fff;border:2px solid #767676;border-radius:6px;"></div>
<div class="t " style="left:237.60px;top:1961.60px;font-size:28px;color:#000;letter-spacing:-1.181px;-webkit-text-stroke:0.5px #fff;">Live Lines</div>
<svg class="b" style="left:581px;top:1969px;" width="17" height="10" viewBox="0 0 17 10"><path d="M1 1 L8.5 8.5 L16 1" fill="none" stroke="#222" stroke-width="2.4"/></svg>
<div class="t " style="left:622.00px;top:1961.90px;font-size:28px;color:#66707a;letter-spacing:-0.562px;-webkit-text-stroke:0.5px #fff;">Showing</div>
<div class="b " style="left:749.5px;top:1950px;width:92px;height:46px;background:#fff;border:2px solid #767676;border-radius:6px;"></div>
<div class="t " style="left:760.00px;top:1961.60px;font-size:28px;color:#000;letter-spacing:-1.875px;-webkit-text-stroke:0.5px #fff;">500</div>
<svg class="b" style="left:814px;top:1969px;" width="17" height="10" viewBox="0 0 17 10"><path d="M1 1 L8.5 8.5 L16 1" fill="none" stroke="#222" stroke-width="2.4"/></svg>
<div class="t " style="left:864.00px;top:1961.90px;font-size:28px;color:#66707a;letter-spacing:0.500px;-webkit-text-stroke:0.5px #fff;">of</div>
<div class="t " style="left:897.60px;top:1961.90px;font-size:28px;color:#66707a;font-weight:bold;">6</div>
<div class="b " style="left:935.3px;top:1947px;width:41.5px;height:52.4px;background:#fff;border:3px solid #ecf4fd;border-radius:7px;"></div>
<div class="b " style="left:985.6px;top:1946.3px;width:54px;height:54px;background:#fff;border:2.5px solid #eef5fd;border-radius:7px;"></div>
<div class="b " style="left:988px;top:1948.8px;width:49.3px;height:49px;background:#808080;border-radius:3px;"></div>
<div class="t " style="left:1008.70px;top:1961.90px;font-size:28px;color:#6f7a86;">1</div>
<div class="b " style="left:1048px;top:1947px;width:41.4px;height:52.4px;background:#fff;border:3px solid #ecf4fd;border-radius:7px;"></div>
<svg class="b" style="left:944px;top:1963.8px;overflow:visible;" width="24" height="24.8" viewBox="0 0 24 24.8"><defs><linearGradient id="ga0" x1="0" y1="0" x2="0" y2="1"><stop offset="0" stop-color="#9af06a"/><stop offset="1" stop-color="#4fc423"/></linearGradient></defs><path transform="translate(0 0) scale(1 1)" d="M0 12.4 L12.5 0 V5.5 H24 V19.3 H12.5 V24.8 Z" fill="url(#ga0)" stroke="#45b51d" stroke-width="1.2" stroke-linejoin="round"/></svg>
<svg class="b" style="left:1057px;top:1963.8px;overflow:visible;" width="24" height="24.8" viewBox="0 0 24 24.8"><defs><linearGradient id="ga1" x1="0" y1="0" x2="0" y2="1"><stop offset="0" stop-color="#9af06a"/><stop offset="1" stop-color="#4fc423"/></linearGradient></defs><path transform="translate(24 0) scale(-1 1)" d="M0 12.4 L12.5 0 V5.5 H24 V19.3 H12.5 V24.8 Z" fill="url(#ga1)" stroke="#45b51d" stroke-width="1.2" stroke-linejoin="round"/></svg>
<svg class="b" style="left:1105px;top:1963px;" width="28.0" height="28.0" viewBox="-1 -1 28 28"><rect x="0.5" y="0.5" width="23" height="23" rx="1" fill="#fff" stroke="#8d96a2" stroke-width="1"/><g fill="#e5edf8"><rect x="2" y="2" width="5" height="5"/><rect x="9.6" y="2" width="5" height="5"/><rect x="17" y="2" width="5" height="5"/><rect x="2" y="9.5" width="5" height="5"/><rect x="17" y="9.5" width="5" height="5"/><rect x="9.6" y="9.5" width="5" height="5"/><rect x="2" y="17" width="5" height="5"/><rect x="9.6" y="17" width="5" height="5"/><rect x="17" y="17" width="5" height="5"/></g><rect x="8.2" y="0.5" width="7.4" height="23" fill="#6fb8f2"/><path d="M8.3 0.5 V23.5 M15.7 0.5 V23.5 M0.5 8.2 H23.5 M0.5 15.7 H23.5" stroke="#9aa3ae" stroke-width=".8" opacity=".8"/><g transform="translate(11.5 25.6) rotate(-45)"><path d="M0 0 L4 -2.9 H17 V2.9 H4 Z" fill="#e9c61f" stroke="#b48f10" stroke-width=".6"/><path d="M0 0 L2.2 -1.6 V1.6 Z" fill="#444"/><rect x="15" y="-2.9" width="2" height="5.8" fill="#f4f4f4"/><path d="M17 -2.9 H18.6 Q20.4 -2.9 20.4 0 Q20.4 2.9 18.6 2.9 H17 Z" fill="#e2452f"/></g></svg>
<svg class="b" style="left:1152px;top:1963px;" width="28" height="26" viewBox="1152 1963 28 26"><rect x="1159.2" y="1965" width="18.8" height="21.8" rx="1.6" fill="#1e8a54"/><rect x="1159.2" y="1965" width="9.4" height="5.6" fill="#2aa36a"/><rect x="1168.6" y="1965" width="9.4" height="5.6" rx="1.2" fill="#35bd82"/><rect x="1168.6" y="1970.6" width="9.4" height="5.4" fill="#24965e"/><rect x="1168.6" y="1976" width="9.4" height="5.4" fill="#1a774a"/><rect x="1159.2" y="1981.2" width="18.8" height="5.6" rx="1.2" fill="#155f3c"/><rect x="1153" y="1970" width="13.2" height="12" rx="1.2" fill="#10703f"/><path d="M1156.6 1972.8 L1162.6 1979.4 M1162.6 1972.8 L1156.6 1979.4" stroke="#fff" stroke-width="1.7"/></svg>
<svg class="b" style="left:1199px;top:1961px;" width="30" height="30" viewBox="1199 1961 30 30"><defs><linearGradient id="wn" x1="0" y1="0" x2="0" y2="1"><stop offset="0" stop-color="#cfe3f6"/><stop offset="1" stop-color="#7fb2e4"/></linearGradient></defs><rect x="1201.8" y="1963.6" width="24.8" height="24.8" fill="none" stroke="#1f76c8" stroke-width="1.8" stroke-dasharray="3.4 2.4"/><rect x="1209" y="1966.8" width="15.2" height="11.6" rx="1.6" fill="url(#wn)" stroke="#1c4f90" stroke-width="1.2"/><rect x="1203.6" y="1973.6" width="15.6" height="11.6" rx="1.6" fill="url(#wn)" stroke="#1c4f90" stroke-width="1.2"/></svg>
<svg class="b" style="left:1246px;top:1958px;" width="29" height="28" viewBox="1246 1958 29 28"><g fill="none" stroke="#67717c" stroke-width="2.1"><path d="M1248.4 1960.4 L1257.4 1969.4 M1257.6 1962.6 V1969.6 H1250.6"/><path d="M1272.6 1960.4 L1263.6 1969.4 M1263.4 1962.6 V1969.6 H1270.4"/><path d="M1248.4 1983.8 L1257.4 1974.8 M1257.6 1981.6 V1974.6 H1250.6"/><path d="M1272.6 1983.8 L1263.6 1974.8 M1263.4 1981.6 V1974.6 H1270.4"/></g></svg>
<div class="t " style="left:1293.80px;top:1961.90px;font-size:28px;color:#66707a;-webkit-text-stroke:0.5px #fff;">1</div>
<div class="t " style="left:1325.50px;top:1961.90px;font-size:28px;color:#66707a;letter-spacing:-1.062px;-webkit-text-stroke:0.5px #fff;">Selected Rows</div>
</div>
</section>
</main>
</body></html>
